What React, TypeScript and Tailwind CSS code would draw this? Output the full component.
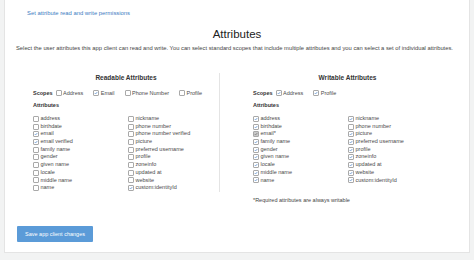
import React from "react";

type Attr = { label: string; checked: boolean; disabled?: boolean };

function Box({ checked, disabled }: { checked: boolean; disabled?: boolean }) {
  return (
    <span
      className={`inline-flex items-center justify-center w-[6px] h-[6px] shrink-0 border rounded-[1px] ${
        disabled ? "bg-[#c8c8c8] border-[#a8a8a8]" : "bg-white border-[#a9a9a9]"
      }`}
    >
      {checked && (
        <svg viewBox="0 0 10 10" className="w-[6px] h-[6px]">
          <path
            d="M1.8 5.2 L4 7.4 L8.4 2.4"
            fill="none"
            stroke={disabled ? "#6b6b6b" : "#3f7cc4"}
            strokeWidth="1.6"
          />
        </svg>
      )}
    </span>
  );
}

function Row({ a }: { a: Attr }) {
  return (
    <div className="flex items-center gap-[1.5px] h-[7.7px]">
      <Box checked={a.checked} disabled={a.disabled} />
      <span className="text-[5.5px] leading-[7.7px] text-[#4a4a4a] whitespace-nowrap">{a.label}</span>
    </div>
  );
}

function Scope({ label, checked }: { label: string; checked: boolean }) {
  return (
    <span className="flex items-center gap-[1.5px]">
      <Box checked={checked} />
      <span className="text-[5.5px] leading-[8px] text-[#4a4a4a]">{label}</span>
    </span>
  );
}

const readCol1: Attr[] = [
  { label: "address", checked: false },
  { label: "birthdate", checked: false },
  { label: "email", checked: true },
  { label: "email verified", checked: true },
  { label: "family name", checked: false },
  { label: "gender", checked: false },
  { label: "given name", checked: false },
  { label: "locale", checked: false },
  { label: "middle name", checked: false },
  { label: "name", checked: false },
];
const readCol2: Attr[] = [
  { label: "nickname", checked: false },
  { label: "phone number", checked: false },
  { label: "phone number verified", checked: false },
  { label: "picture", checked: false },
  { label: "preferred username", checked: false },
  { label: "profile", checked: false },
  { label: "zoneinfo", checked: false },
  { label: "updated at", checked: false },
  { label: "website", checked: false },
  { label: "custom:identityId", checked: true },
];
const writeCol1: Attr[] = [
  { label: "address", checked: true },
  { label: "birthdate", checked: true },
  { label: "email*", checked: true, disabled: true },
  { label: "family name", checked: true },
  { label: "gender", checked: true },
  { label: "given name", checked: true },
  { label: "locale", checked: true },
  { label: "middle name", checked: true },
  { label: "name", checked: true },
];
const writeCol2: Attr[] = [
  { label: "nickname", checked: true },
  { label: "phone number", checked: false },
  { label: "picture", checked: true },
  { label: "preferred username", checked: true },
  { label: "profile", checked: true },
  { label: "zoneinfo", checked: true },
  { label: "updated at", checked: true },
  { label: "website", checked: true },
  { label: "custom:identityId", checked: true },
];

function Columns({ c1, c2 }: { c1: Attr[]; c2: Attr[] }) {
  return (
    <div className="grid grid-cols-[95px_1fr] mt-[6px]">
      <div>{c1.map((a) => <Row key={a.label} a={a} />)}</div>
      <div>{c2.map((a) => <Row key={a.label} a={a} />)}</div>
    </div>
  );
}

export default function App() {
  return (
    <div className="w-[474px] h-[260px] bg-[#f2f3f3] px-[4px] pb-[7px] overflow-hidden" style={{ fontFamily: '"Liberation Sans", Arial, sans-serif' }}>
      <div className="bg-white border-x border-b border-[#e4e4e4] px-[11px] pt-[9px] pb-[10px] h-[253px]">
        <div className="text-[5.85px] leading-[8px] text-[#3b7bbf] pl-[11px]">Set attribute read and write permissions</div>
        <div className="mt-[10px] text-center text-[11.5px] leading-[14px] font-medium text-[#222]">Attributes</div>
        <div className="mt-[3px] text-[5.8px] leading-[8px] text-[#444] whitespace-nowrap">
          Select the user attributes this app client can read and write. You can select standard scopes that include multiple attributes and you can select a set of individual attributes.
        </div>

        <div className="grid grid-cols-2 mt-[21px]">
          {/* Readable */}
          <div className="pr-[17px]">
            <div className="border-r border-[#e4e4e4] pl-[17px] h-[119px]">
              <div className="text-center text-[6.5px] leading-[10px] font-bold text-[#333]">Readable Attributes</div>
              <div className="flex items-center mt-[6px] gap-[10px]">
                <span className="text-[5.5px] leading-[8px] font-bold text-[#333] -mr-[7px]">Scopes</span>
                <Scope label="Address" checked={false} />
                <Scope label="Email" checked={true} />
                <Scope label="Phone Number" checked={false} />
                <Scope label="Profile" checked={false} />
              </div>
              <div className="mt-[4px] text-[5.5px] leading-[8px] font-bold text-[#333]">Attributes</div>
              <Columns c1={readCol1} c2={readCol2} />
            </div>
          </div>

          {/* Writable */}
          <div>
            <div className="text-center text-[6.5px] leading-[10px] font-bold text-[#333]">Writable Attributes</div>
            <div className="pl-[16px]">
              <div className="flex items-center mt-[6px] gap-[10px]">
                <span className="text-[5.5px] leading-[8px] font-bold text-[#333] -mr-[7px]">Scopes</span>
                <Scope label="Address" checked={true} />
                <Scope label="Profile" checked={true} />
              </div>
              <div className="mt-[4px] text-[5.5px] leading-[8px] font-bold text-[#333]">Attributes</div>
              <Columns c1={writeCol1} c2={writeCol2} />
              <div className="mt-[12px] text-[5.5px] leading-[8px] text-[#444]">*Required attributes are always writable</div>
            </div>
          </div>
        </div>

        <button className="ml-[1px] mt-[22px] w-[76px] h-[16px] bg-[#5b9bd8] text-white text-[5.5px] rounded-[1px] flex items-center justify-center">
          Save app client changes
        </button>
      </div>
    </div>
  );
}
